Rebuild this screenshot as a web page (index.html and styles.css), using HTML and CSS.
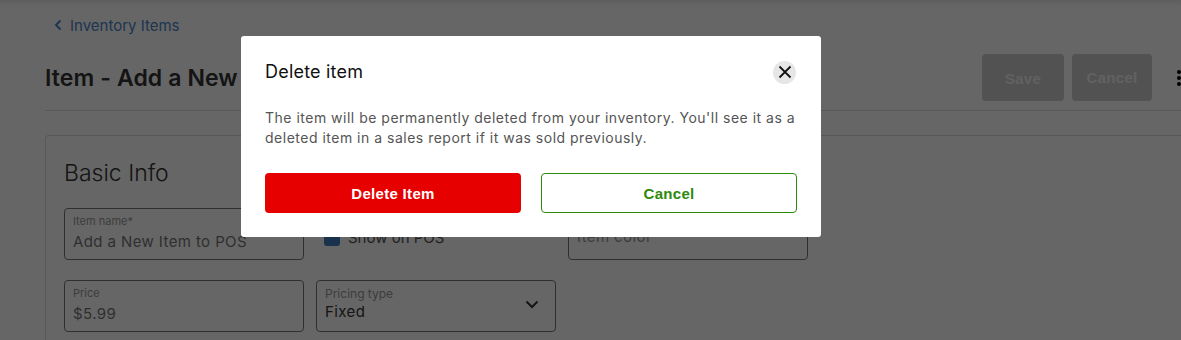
FILE: index.html
```html
<!DOCTYPE html>
<html>
<head>
<meta charset="utf-8">
<link rel="stylesheet" href="styles.css">
</head>
<body>
<div class="page">
  <div class="crumb">
    <svg class="crumb-icon" width="8" height="12" viewBox="0 0 8 12"><path d="M6.5 1.5 L2 6 L6.5 10.5" fill="none" stroke="currentColor" stroke-width="2"/></svg>
    <span>Inventory Items</span>
  </div>
  <div class="header">
    <h1 class="title">Item - Add a New Item to POS</h1>
    <div class="actions">
      <button class="btn-disabled save">Save</button>
      <button class="btn-disabled cancel">Cancel</button>
      <div class="dots"><i></i><i></i><i></i></div>
    </div>
  </div>
  <div class="divider"></div>
  <div class="card">
    <h2 class="card-title">Basic Info</h2>
    <div class="row">
      <div class="field">
        <div class="label">Item name*</div>
        <div class="value">Add a New Item to POS</div>
      </div>
      <label class="check"><span class="box"></span><span>Show on POS</span></label>
      <div class="field color">
        <div class="value placeholder">Item color</div>
      </div>
    </div>
    <div class="row row2">
      <div class="field">
        <div class="label">Price</div>
        <div class="value">$5.99</div>
      </div>
      <div class="field select">
        <div class="label">Pricing type</div>
        <div class="value">Fixed</div>
        <svg class="chev" width="14" height="9" viewBox="0 0 14 9"><path d="M1.5 1.5 L7 7 L12.5 1.5" fill="none" stroke="currentColor" stroke-width="2"/></svg>
      </div>
    </div>
  </div>
</div>
<div class="overlay">
  <div class="modal">
    <div class="modal-head">
      <h3 class="modal-title">Delete item</h3>
      <button class="close" aria-label="Close">
        <svg width="14" height="14" viewBox="0 0 14 14"><path d="M1.5 1.5 L12.5 12.5 M12.5 1.5 L1.5 12.5" stroke="#111" stroke-width="1.8" fill="none"/></svg>
      </button>
    </div>
    <p class="modal-body">The item will be permanently deleted from your inventory. You'll see it as a deleted item in a sales report if it was sold previously.</p>
    <div class="modal-actions">
      <button class="btn-danger">Delete Item</button>
      <button class="btn-outline">Cancel</button>
    </div>
  </div>
</div>
</body>
</html>
```
FILE: styles.css
```css
* { box-sizing: border-box; }
html, body { margin: 0; padding: 0; }
body {
  width: 1181px;
  height: 340px;
  overflow: hidden;
  background: #fff;
  font-family: Inter, "Noto Sans", sans-serif;
  position: relative;
}
.page {
  padding: 14px 0 0 45px;
}
.crumb {
  display: flex;
  align-items: center;
  gap: 8px;
  padding-left: 9px;
  height: 22px;
  color: #4a86c8;
  font-size: 15px;
}
.crumb-icon { display: block; }
.header {
  display: flex;
  align-items: center;
  justify-content: space-between;
  margin-top: 18px;
  height: 47px;
}
.title {
  margin: 0;
  font-size: 23px;
  font-weight: 600;
  color: #333;
  letter-spacing: 0.1px;
  white-space: nowrap;
}
.actions {
  display: flex;
  align-items: center;
  gap: 8px;
}
.btn-disabled {
  height: 47px;
  border: none;
  border-radius: 4px;
  background: #cdcdcd;
  color: #f2f2f2;
  font-family: "Liberation Sans", Arial, sans-serif;
  font-weight: 700;
  font-size: 15px;
  letter-spacing: 0.3px;
}
.save { width: 82px; padding-top: 3px; }
.cancel { width: 80px; }
.dots {
  width: 6px;
  margin-left: 15px;
  display: flex;
  flex-direction: column;
  gap: 2px;
  padding-left: 2px;
}
.dots i {
  display: block;
  width: 4px;
  height: 4px;
  border-radius: 50%;
  background: #000;
}
.divider {
  margin-top: 9px;
  border-top: 1px solid #dcdcdc;
}
.card {
  margin-top: 24px;
  border-top: 1px solid #dcdcdc;
  border-left: 1px solid #dcdcdc;
  border-top-left-radius: 4px;
  padding: 22px 0 0 18px;
  height: 220px;
}
.card-title {
  margin: 0;
  font-size: 23px;
  font-weight: 300;
  color: #333;
  line-height: 30px;
}
.row {
  display: flex;
  align-items: flex-start;
  margin-top: 20px;
}
.row2 { margin-top: 20px; gap: 12px; }
.field {
  position: relative;
  width: 240px;
  height: 52px;
  border: 1px solid #777;
  border-radius: 4px;
  padding: 5px 8px 0 8px;
}
.label {
  font-size: 11px;
  color: #999;
  line-height: 14px;
}
.value {
  margin-top: 4px;
  font-size: 15px;
  color: #777;
  line-height: 20px;
  letter-spacing: 0.4px;
}
.select .label { margin-top: 1px; font-size: 12px; }
.select .value { color: #333; margin-top: 1px; }
.chev {
  position: absolute;
  right: 16px;
  top: 19px;
  color: #333;
}
.check {
  display: flex;
  align-items: center;
  gap: 8px;
  width: 244px;
  margin-left: 20px;
  margin-top: 20px;
  font-size: 15px;
  color: #555;
}
.box {
  width: 16px;
  height: 16px;
  border-radius: 3px;
  background: #3f7ec2;
}
.color .value { margin-top: 13px; color: #999; }
.overlay {
  position: absolute;
  inset: 0;
  background: rgba(0,0,0,0.6);
}
.overlay::before {
  content: "";
  position: absolute;
  left: 0;
  right: 0;
  top: 0;
  height: 6px;
  background: linear-gradient(rgba(0,0,0,0.08), rgba(0,0,0,0));
}
.modal {
  position: absolute;
  left: 241px;
  top: 36px;
  width: 580px;
  background: #fff;
  border-radius: 3px;
  padding: 24px 24px 24px 24px;
}
.modal-head {
  display: flex;
  align-items: center;
  justify-content: space-between;
  height: 24px;
}
.modal-title {
  margin: 0;
  font-size: 18px;
  font-weight: 400;
  color: #111;
  line-height: 24px;
  letter-spacing: 0.2px;
}
.close {
  width: 23px;
  height: 23px;
  margin-right: 1px;
  border: none;
  border-radius: 50%;
  background: #e6e6e6;
  padding: 0;
  display: flex;
  align-items: center;
  justify-content: center;
}
.close svg { display: block; }
.modal-body {
  margin: 24px 0 0 0;
  font-size: 14px;
  line-height: 20px;
  color: #555;
  letter-spacing: 0.5px;
}
.modal-actions {
  display: grid;
  grid-template-columns: 1fr 1fr;
  gap: 20px;
  margin-top: 25px;
}
.modal-actions button {
  height: 40px;
  border-radius: 4px;
  font-family: "Liberation Sans", Arial, sans-serif;
  font-weight: 700;
  font-size: 15px;
  letter-spacing: 0.3px;
}
.btn-danger {
  background: #e60000;
  border: none;
  color: #fff;
}
.btn-outline {
  background: #fff;
  border: 1px solid #2d8a0a;
  color: #2d8a0a;
}
```
